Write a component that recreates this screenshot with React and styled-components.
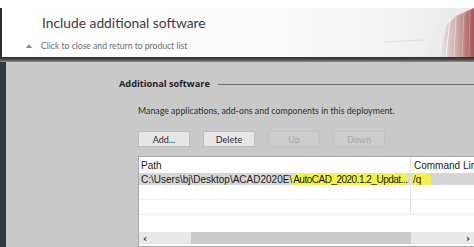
import React from "react";
import styled, { createGlobalStyle } from "styled-components";

const Global = createGlobalStyle`
  html, body { margin: 0; padding: 0; background: #ffffff; }
  body { width: 474px; height: 247px; overflow: hidden; font-family: Lato, "Open Sans", sans-serif; }
`;

const Frame = styled.div`
  width: 474px;
  height: 247px;
  display: flex;
  flex-direction: column;
  background: #ffffff;
  padding-top: 8px;
  box-sizing: border-box;
`;

const Window = styled.div`
  flex: 1;
  display: flex;
  flex-direction: column;
  border-left: 2px solid #2b2f35;
  min-height: 0;
`;

const Header = styled.div`
  height: 49px;
  position: relative;
  background: linear-gradient(90deg, #ffffff 0%, #fbfbfb 60%, #f2f2f2 85%, #e9e9e9 100%);
  display: flex;
  flex-direction: column;
  padding-left: 40px;
  box-sizing: border-box;
  overflow: hidden;
`;

const Title = styled.div`
  font-family: Lato, "Open Sans", sans-serif;
  font-size: 13.8px;
  color: #3c3c3c;
  margin-top: 6px;
`;

const BackLink = styled.div`
  display: flex;
  align-items: center;
  gap: 9px;
  margin-top: 10px;
  margin-left: -16px;
  font-family: Lato, "Open Sans", sans-serif;
  font-size: 8.6px;
  color: #6c6c6c;
`;

const Tri = styled.span`
  width: 0;
  height: 0;
  border-left: 3.5px solid transparent;
  border-right: 3.5px solid transparent;
  border-bottom: 4px solid #8a8a8a;
`;

const Art = styled.svg`
  position: absolute;
  right: 0;
  top: 0;
`;

const Shadow = styled.div`
  height: 5px;
  background: linear-gradient(180deg, #2d2d2d 0%, #4a4a4a 50%, #8e8e8e 100%);
  margin-left: -2px;
`;

const Body = styled.div`
  flex: 1;
  background: #c9c9c9;
  margin-left: -2px;
  border-left: 6px solid #2f3944;
  display: flex;
  flex-direction: column;
  min-height: 0;
  overflow: hidden;
`;

const SectionRow = styled.div`
  display: flex;
  align-items: center;
  margin-top: 15px;
  padding-left: 113px;
  gap: 8px;
`;

const SectionTitle = styled.div`
  font-family: "Open Sans", sans-serif;
  font-weight: 700;
  font-size: 9.2px;
  color: #1e1e1e;
  white-space: nowrap;
`;

const Rule = styled.div`
  flex: 1;
  height: 1px;
  background: #6e6e6e;
  margin-top: 1px;
`;

const Content = styled.div`
  padding-left: 132px;
  display: flex;
  flex-direction: column;
  flex: 1;
  min-height: 0;
`;

const Desc = styled.div`
  font-family: Lato, "Open Sans", sans-serif;
  font-size: 8.8px;
  color: #2e2e2e;
  margin-top: 15px;
  white-space: nowrap;
`;

const Buttons = styled.div`
  display: flex;
  gap: 13px;
  margin-top: 15px;
`;

const Btn = styled.div`
  width: 52px;
  height: 16px;
  box-sizing: border-box;
  display: flex;
  align-items: center;
  justify-content: center;
  font-family: Lato, "Open Sans", sans-serif;
  font-size: 9px;
  color: ${(p) => (p.disabled ? "#a6a6a6" : "#2a2a2a")};
  background: ${(p) => (p.disabled ? "#cdcdcd" : "#e6e6e6")};
  border: 1px solid ${(p) => (p.disabled ? "#c2c2c2" : "#bdbdbd")};
`;

const Table = styled.div`
  margin-top: 9px;
  flex: 1;
  background: #ffffff;
  border: 1px solid #a9a9a9;
  border-right: none;
  display: flex;
  flex-direction: column;
  min-height: 0;
  font-family: "Liberation Sans", Arial, sans-serif;
`;

const Grid = styled.div`
  display: grid;
  grid-template-columns: 271px 1fr;
`;

const HeadCell = styled.div`
  height: 16px;
  display: flex;
  align-items: center;
  padding-left: ${(p) => (p.divider ? "3px" : "2px")};
  font-size: 10px;
  color: #1a1a1a;
  white-space: nowrap;
  overflow: hidden;
  border-left: ${(p) => (p.divider ? "1px solid #e4e4e4" : "none")};
`;

const Cell = styled.div`
  height: 12px;
  display: flex;
  align-items: center;
  padding-left: ${(p) => (p.divider ? "1px" : "2px")};
  font-size: 10px;
  color: #1a1a1a;
  white-space: nowrap;
  overflow: hidden;
  background: ${(p) => (p.selected ? "#d6d6d6" : "transparent")};
  border-left: ${(p) => (p.divider ? "1px solid #e4e4e4" : "none")};
  border-bottom: ${(p) => (p.line ? "1px solid #f1f1f1" : "none")};
  box-sizing: border-box;
`;

const EmptyCell = styled(Cell)`
  height: 15px;
`;

const Mark = styled.span`
  background: #f2f24a;
  border-radius: 5px;
  padding: 1px 1px;
  letter-spacing: ${(p) => (p.tight ? "-0.5px" : "0")};
`;

const Spacer = styled.div`
  flex: 1;
`;

const HScroll = styled.div`
  height: 12px;
  display: flex;
  align-items: center;
  background: #e8e8e8;
  margin-bottom: 2px;
`;

const Arrow = styled.div`
  width: 12px;
  font-size: 10px;
  color: #333;
  display: flex;
  align-items: center;
  justify-content: center;
  font-family: "DejaVu Sans", sans-serif;
  font-weight: 700;
`;

const TrackPad = styled.div`
  width: ${(p) => p.w}px;
`;

const Thumb = styled.div`
  width: 220px;
  height: 12px;
  background: #cbcbcb;
`;

export default function App() {
  return (
    <>
      <Global />
      <Frame>
        <Window>
          <Header>
            <Title>Include additional software</Title>
            <BackLink>
              <Tri />
              <span>Click to close and return to product list</span>
            </BackLink>
            <Art width="90" height="49" viewBox="0 0 90 49">
              <defs>
                <linearGradient id="rg" x1="0" y1="0" x2="1" y2="0">
                  <stop offset="0" stopColor="#e9e6e6" />
                  <stop offset="0.5" stopColor="#c9a0a0" />
                  <stop offset="1" stopColor="#9a3838" />
                </linearGradient>
              </defs>
              <polygon points="42,49 52,20 64,10 90,0 90,49" fill="#ececec" />
              <polygon points="56,49 62,18 72,8 90,0 90,49" fill="url(#rg)" opacity="0.85" />
              <line x1="66" y1="10" x2="62" y2="49" stroke="#ffffff" strokeWidth="1" opacity="0.8" />
              <line x1="72" y1="6" x2="70" y2="49" stroke="#f4dede" strokeWidth="1" opacity="0.7" />
              <line x1="80" y1="3" x2="78" y2="49" stroke="#e8c4c4" strokeWidth="1" opacity="0.7" />
              <line x1="86" y1="1" x2="85" y2="49" stroke="#d49a9a" strokeWidth="1" opacity="0.7" />
              <line x1="0" y1="34" x2="40" y2="32" stroke="#d8d8d8" strokeWidth="0.8" />
            </Art>
          </Header>
          <Shadow />
          <Body>
            <SectionRow>
              <SectionTitle>Additional software</SectionTitle>
              <Rule />
            </SectionRow>
            <Content>
              <Desc>Manage applications, add-ons and components in this deployment.</Desc>
              <Buttons>
                <Btn>Add...</Btn>
                <Btn>Delete</Btn>
                <Btn disabled>Up</Btn>
                <Btn disabled>Down</Btn>
              </Buttons>
              <Table>
                <Grid>
                  <HeadCell>Path</HeadCell>
                  <HeadCell divider>Command Lin</HeadCell>
                  <Cell selected>
                    C:\Users\bj\Desktop\ACAD2020E\<Mark tight>AutoCAD_2020.1.2_Updat...</Mark>
                  </Cell>
                  <Cell selected divider>
                    <Mark>/q&nbsp;&nbsp;&nbsp;</Mark>
                  </Cell>
                  <EmptyCell line />
                  <EmptyCell line divider />
                  <EmptyCell line />
                  <EmptyCell line divider />
                </Grid>
                <Spacer />
                <HScroll>
                  <Arrow>‹</Arrow>
                  <TrackPad w={40} />
                  <Thumb />
                  <Spacer />
                  <Arrow>›</Arrow>
                </HScroll>
              </Table>
            </Content>
          </Body>
        </Window>
      </Frame>
    </>
  );
}
